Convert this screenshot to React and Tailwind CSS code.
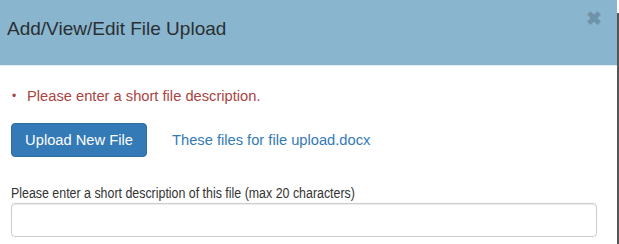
export default function App() {
  const font = { fontFamily: '"Liberation Sans", Arial, sans-serif' };
  return (
    <div className="flex w-[619px] h-[244px] overflow-hidden bg-white" style={font}>
      <div className="flex-1 flex flex-col">
        <div className="h-[66px] bg-[#89b6ce] flex items-start justify-between pl-[7px] pr-[15px] border-b border-[#dfeaf1]">
          <div className="mt-[17px] text-[19px] leading-[24px] text-[#2b2f33]">Add/View/Edit File Upload</div>
          <div className="mt-[9px] text-[19px] leading-[20px] font-bold text-[#6f93a8]">✖</div>
        </div>
        <div className="pl-[11px] pr-[20px] pt-[20px]">
          <div className="flex items-center text-[14.7px] leading-[21px] text-[#a94442]">
            <span className="w-[16px] pl-[1px] text-[12px]">•</span>
            <span>Please enter a short file description.</span>
          </div>
          <div className="flex items-center mt-[16px]">
            <button className="h-[34px] w-[136px] rounded-[4px] bg-[#337ab7] border border-[#2e6da4] text-white text-[14.7px] leading-[20px]">
              Upload New File
            </button>
            <span className="ml-[25px] text-[14.7px] text-[#337ab7]">These files for file upload.docx</span>
          </div>
          <div className="mt-[26px] text-[15.5px] leading-[20px] text-[#333] whitespace-nowrap">
            <span className="inline-block origin-left scale-x-[0.80]">
              Please enter a short description of this file (max 20 characters)
            </span>
          </div>
          <div className="h-[34px] w-[586px] rounded-[4px] border border-[#ccc] bg-white shadow-[inset_0_1px_1px_rgba(0,0,0,0.075)]"></div>
        </div>
      </div>
      <div className="w-[2px] mt-[13px] bg-[#555]"></div>
    </div>
  );
}
